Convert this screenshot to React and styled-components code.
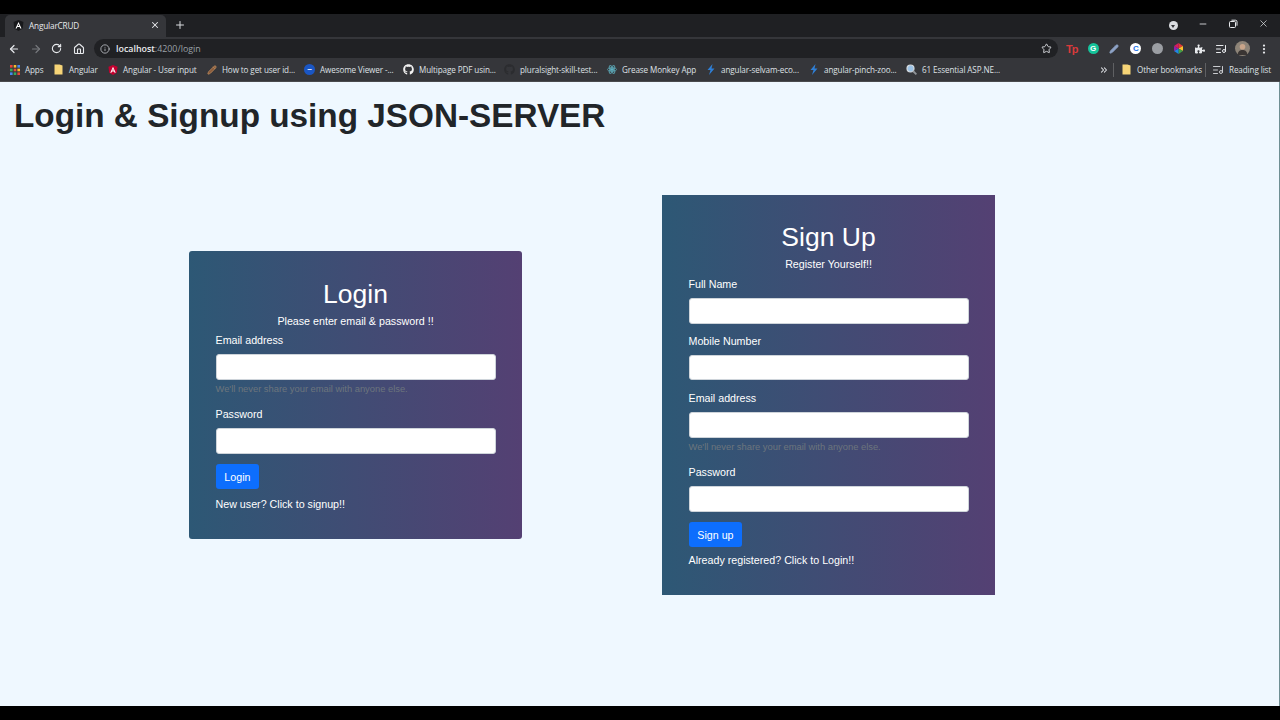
import React from 'react';
import styled, { createGlobalStyle } from 'styled-components';
import { ArrowLeft, ArrowRight, RotateCw, Home, Info, Star, X, Plus, Minus, MoreVertical, ListMusic, Pencil, ChevronsRight } from 'lucide-react';
import { FaGithub, FaPuzzlePiece } from 'react-icons/fa';

const GlobalStyle = createGlobalStyle`
    html, body {
        margin: 0;
        padding: 0;
        background: #000;
    }
    body {
        font-family: "Liberation Sans", Arial, sans-serif;
    }
`;

const Screen = styled.div`
    width: 1280px;
    height: 720px;
    overflow: hidden;
    display: flex;
    flex-direction: column;
    background: #000;
    padding: 14px 0;
    box-sizing: border-box;
`;

const TabStrip = styled.div`
    height: 23px;
    flex: none;
    background: #1f2023;
    display: flex;
    align-items: flex-end;
    padding-left: 5px;
`;

const Tab = styled.div`
    width: 161px;
    height: 22px;
    box-sizing: border-box;
    background: #35363a;
    border-radius: 5px 5px 0 0;
    display: flex;
    align-items: center;
    padding: 0 6px 2px 8px;
    color: #e8eaed;
    font: 8.2px "Open Sans", sans-serif;
`;

const TabTitle = styled.span`
    margin-left: 5px;
    flex: 1;
    letter-spacing: -0.15px;
`;

const NewTab = styled.div`
    margin: 0 0 2px 8px;
    height: 20px;
    display: flex;
    align-items: center;
    color: #dadce0;
`;

const WindowButtons = styled.div`
    margin-left: auto;
    height: 23px;
    display: flex;
    align-items: center;
    color: #e8eaed;
    padding-right: 1px;
`;

const ProfileDot = styled.div`
    width: 9px;
    height: 9px;
    border-radius: 50%;
    background: #dadce0;
    margin: 0 10px 0 0;
    display: flex;
    align-items: center;
    justify-content: center;
    &::after {
        content: "";
        border: 2.5px solid transparent;
        border-top: 3px solid #35363a;
        margin-top: 3px;
    }
`;

const WinBtn = styled.div`
    width: 30.5px;
    display: flex;
    justify-content: center;
    margin-bottom: 4px;
`;

const Toolbar = styled.div`
    height: 23px;
    flex: none;
    background: #35363a;
    display: flex;
    align-items: center;
    padding-left: 8px;
    color: #e8eaed;
`;

const NavIcon = styled.div`
    width: 21.5px;
    display: flex;
    color: ${p => (p.$dim ? '#77797c' : '#e8eaed')};
`;

const Omnibox = styled.div`
    width: 964px;
    height: 19px;
    box-sizing: border-box;
    border-radius: 10px;
    background: #202124;
    display: flex;
    align-items: center;
    padding: 0 6.5px 0 6px;
    font: 8.9px "Open Sans", sans-serif;
    color: #9aa0a6;
`;

const Host = styled.span`
    margin-left: 6px;
    color: #e8eaed;
    font-weight: 600;
`;

const OmniStar = styled.div`
    margin-left: auto;
    display: flex;
`;

const Extensions = styled.div`
    display: flex;
    align-items: center;
    margin-left: 3px;
`;

const Ext = styled.div`
    width: 21.4px;
    display: flex;
    justify-content: center;
    align-items: center;
`;

const Badge = styled.div`
    width: 11px;
    height: 11px;
    flex: none;
    border-radius: 50%;
    background: ${p => p.$bg};
    color: ${p => p.$fg || '#fff'};
    font: bold 8px "Liberation Sans", sans-serif;
    display: flex;
    align-items: center;
    justify-content: center;
`;

const RedMark = styled.span`
    color: #d93a3a;
    font: bold 11px "Liberation Sans", sans-serif;
    letter-spacing: -1px;
`;

const Bookmarks = styled.div`
    height: 22px;
    flex: none;
    background: #35363a;
    box-sizing: border-box;
    border-bottom: 1px solid #4a4b4e;
    display: flex;
    align-items: center;
    padding: 0 10px 2px;
    color: #dfe1e5;
    font: 8.1px "Open Sans", sans-serif;
    white-space: nowrap;
`;

const Mark = styled.div`
    display: flex;
    align-items: center;
    gap: 5px;
    width: ${p => p.$w}px;
    margin-right: ${p => p.$gap ?? 11}px;
    margin-left: ${p => p.$left ?? 0}px;
    flex: none;
    & > svg {
        flex: none;
    }
`;

const MarkLabel = styled.span`
    letter-spacing: -0.1px;
`;

const Sep = styled.div`
    width: 1px;
    height: 14px;
    background: #5f6063;
    flex: none;
`;

const Overflow = styled.div`
    margin-left: auto;
    margin-right: 4px;
    display: flex;
`;

const Page = styled.main`
    flex: 1;
    background: #eff8ff;
    border-right: 1px solid #6f8f94;
    display: flex;
    flex-direction: column;
`;

const Heading = styled.h1`
    margin: 14px 0 0 14px;
    font-size: 33.3px;
    line-height: 39px;
    font-weight: 700;
    color: #212529;
`;

const Cards = styled.div`
    margin-top: 20px;
    height: 480px;
    padding-left: 189px;
    display: flex;
    align-items: center;
    gap: 140px;
`;

const Card = styled.section`
    width: 333px;
    box-sizing: border-box;
    padding: ${p => p.$pad}px 26.5px 0;
    height: ${p => p.$h}px;
    border-radius: ${p => p.$r}px;
    background: linear-gradient(to right, #2d5875, #544073);
    color: #fff;
`;

const Title = styled.h2`
    margin: 0;
    font-size: 26.5px;
    line-height: 32px;
    font-weight: 400;
    text-align: center;
`;

const Sub = styled.p`
    margin: 3px 0 ${p => p.$gap}px;
    font-size: 10.7px;
    line-height: 17px;
    text-align: center;
`;

const Label = styled.label`
    display: block;
    margin-top: ${p => p.$top ?? 0}px;
    font-size: 10.7px;
    line-height: 19px;
`;

const Input = styled.input`
    display: block;
    width: 100%;
    height: 25.5px;
    margin-top: 4px;
    box-sizing: border-box;
    border: 1px solid #ced4da;
    border-radius: 3px;
    background: #fff;
    padding: 0;
`;

const Help = styled.div`
    margin-top: 2.5px;
    font-size: 9.35px;
    line-height: 14px;
    color: #6c757d;
`;

const Submit = styled.button`
    display: block;
    margin-top: 10.5px;
    height: 25px;
    box-sizing: border-box;
    padding: 0 8.8px;
    border: 0;
    border-radius: 3px;
    background: #0d6efd;
    color: #fff;
    font: 10.7px "Liberation Sans", sans-serif;
`;

const Foot = styled.p`
    margin: ${p => p.$top}px 0 0;
    font-size: 10.7px;
    line-height: 18px;
`;

function AngularIcon({ bg, fg, size = 10 }) {
    return (
        <svg width={size} height={size} viewBox="0 0 20 20">
            <polygon points="10,0 19,3.5 17.6,15.5 10,20 2.4,15.5 1,3.5" fill={bg} />
            <polygon points="10,3.5 15.5,15.5 13.2,15.5 12.1,12.8 7.9,12.8 6.8,15.5 4.5,15.5" fill={fg} />
            <polygon points="10,7.5 11.3,11 8.7,11" fill={bg} />
        </svg>
    );
}

function FolderIcon() {
    return (
        <svg width="10" height="11" viewBox="0 0 10 11">
            <path d="M0.5 0.5h5l3 1v9h-8z" fill="#f6d477" />
        </svg>
    );
}

function AppsIcon() {
    const colors = ['#e8453c', '#f9bb2d', '#4688f1', '#3aa757', '#e8453c', '#f9bb2d', '#4688f1', '#3aa757', '#e8453c'];
    return (
        <svg width="10" height="10" viewBox="0 0 10 10">
            {colors.map((c, i) => (
                <rect key={i} x={(i % 3) * 3.7} y={Math.floor(i / 3) * 3.7} width="2.6" height="2.6" fill={c} />
            ))}
        </svg>
    );
}

function BoltIcon() {
    return (
        <svg width="10" height="11" viewBox="0 0 9 11">
            <path d="M6 0L1 6h3l-1.5 5L8 4.5H5z" fill="#2f7fd6" />
        </svg>
    );
}

function SearchDocIcon() {
    return (
        <svg width="11" height="11" viewBox="0 0 11 11">
            <circle cx="4.5" cy="4.5" r="3.5" fill="#9cc3e6" stroke="#d5dbe0" strokeWidth="1.2" />
            <path d="M7 7l3.4 3.4" stroke="#8f9499" strokeWidth="1.8" />
        </svg>
    );
}

function ReactDot() {
    return (
        <svg width="10" height="11" viewBox="0 0 11 11" fill="none" stroke="#5fb3c4" strokeWidth="0.8">
            <ellipse cx="5.5" cy="5.5" rx="5" ry="2" />
            <ellipse cx="5.5" cy="5.5" rx="5" ry="2" transform="rotate(60 5.5 5.5)" />
            <ellipse cx="5.5" cy="5.5" rx="5" ry="2" transform="rotate(120 5.5 5.5)" />
            <circle cx="5.5" cy="5.5" r="1.2" fill="#5fb3c4" />
        </svg>
    );
}

function ColorWheel() {
    return (
        <svg width="11" height="11" viewBox="0 0 11 11">
            <polygon points="5.5,0 10,3 5.5,5.5" fill="#e53935" />
            <polygon points="10,3 10,8 5.5,5.5" fill="#fbc02d" />
            <polygon points="10,8 5.5,11 5.5,5.5" fill="#43a047" />
            <polygon points="5.5,11 1,8 5.5,5.5" fill="#1e88e5" />
            <polygon points="1,8 1,3 5.5,5.5" fill="#8e24aa" />
            <polygon points="1,3 5.5,0 5.5,5.5" fill="#d81b60" />
        </svg>
    );
}

function Avatar() {
    return (
        <svg width="15" height="15" viewBox="0 0 15 15">
            <circle cx="7.5" cy="7.5" r="7.5" fill="#8d8478" />
            <circle cx="7.5" cy="5.8" r="2.8" fill="#c9a58a" />
            <path d="M2.5 14c.5-4 2.5-5 5-5s4.5 1 5 5z" fill="#3a3533" />
        </svg>
    );
}

const bookmarks = [
    { w: 33, icon: <AppsIcon />, label: 'Apps' },
    { w: 43, icon: <FolderIcon />, label: 'Angular' },
    { w: 88, icon: <AngularIcon bg="#c3002f" fg="#fff" />, label: 'Angular - User input' },
    { w: 86, icon: <Pencil size={10} color="#b98a5e" fill="#8a5a3a" />, label: 'How to get user id...' },
    { w: 88, icon: <Badge $bg="#1a56c4">~</Badge>, label: 'Awesome Viewer -...' },
    { w: 90, icon: <FaGithub size={11} color="#f1f1f1" />, label: 'Multipage PDF usin...' },
    { w: 92, icon: <FaGithub size={11} color="#2b2c2f" />, label: 'pluralsight-skill-test...' },
    { w: 88, icon: <ReactDot />, label: 'Grease Monkey App' },
    { w: 92, icon: <BoltIcon />, label: 'angular-selvam-eco...' },
    { w: 86, icon: <BoltIcon />, label: 'angular-pinch-zoo...' },
    { w: 91, icon: <SearchDocIcon />, label: '61 Essential ASP.NE...' },
];

function BrowserChrome() {
    return (
        <>
            <TabStrip>
                <Tab>
                    <AngularIcon bg="#17181b" fg="#fff" size={11} />
                    <TabTitle>AngularCRUD</TabTitle>
                    <X size={10} strokeWidth={2.5} />
                </Tab>
                <NewTab><Plus size={12} strokeWidth={2} /></NewTab>
                <WindowButtons>
                    <ProfileDot />
                    <WinBtn><Minus size={10} /></WinBtn>
                    <WinBtn>
                        <svg width="10" height="10" viewBox="0 0 10 10" fill="none" stroke="currentColor">
                            <rect x="1.5" y="2.5" width="6" height="6" rx="1" />
                            <path d="M3.5 1.2h4a1.5 1.5 0 0 1 1.5 1.5v4" />
                        </svg>
                    </WinBtn>
                    <WinBtn><X size={11} strokeWidth={1.5} /></WinBtn>
                </WindowButtons>
            </TabStrip>
            <Toolbar>
                <NavIcon><ArrowLeft size={12} strokeWidth={2.4} /></NavIcon>
                <NavIcon $dim><ArrowRight size={12} strokeWidth={2.4} /></NavIcon>
                <NavIcon><RotateCw size={11} strokeWidth={2.4} /></NavIcon>
                <NavIcon><Home size={12} strokeWidth={2.2} /></NavIcon>
                <Omnibox>
                    <Info size={10} color="#bdc1c6" />
                    <Host>localhost</Host>:4200/login
                    <OmniStar><Star size={11} color="#dadce0" strokeWidth={2} /></OmniStar>
                </Omnibox>
                <Extensions>
                    <Ext><RedMark>Tp</RedMark></Ext>
                    <Ext><Badge $bg="#15c39a">G</Badge></Ext>
                    <Ext><Pencil size={10} color="#8ea3c7" fill="#8ea3c7" /></Ext>
                    <Ext><Badge $bg="#fff" $fg="#1a73e8">C</Badge></Ext>
                    <Ext><Badge $bg="#9b9ea3" /></Ext>
                    <Ext><ColorWheel /></Ext>
                    <Ext><FaPuzzlePiece size={10} color="#e8eaed" /></Ext>
                    <Ext><ListMusic size={12} color="#e8eaed" /></Ext>
                    <Ext><Avatar /></Ext>
                    <Ext><MoreVertical size={12} color="#e8eaed" strokeWidth={2.5} /></Ext>
                </Extensions>
            </Toolbar>
            <Bookmarks>
                {bookmarks.map(b => (
                    <Mark key={b.label} $w={b.w}>
                        {b.icon}
                        <MarkLabel>{b.label}</MarkLabel>
                    </Mark>
                ))}
                <Overflow><ChevronsRight size={10} strokeWidth={2.5} /></Overflow>
                <Sep />
                <Mark $w={76} $gap={7} $left={8}>
                    <FolderIcon />
                    <MarkLabel>Other bookmarks</MarkLabel>
                </Mark>
                <Sep />
                <Mark $w={58} $gap={0} $left={6}>
                    <ListMusic size={12} color="#c9cbcf" />
                    <MarkLabel>Reading list</MarkLabel>
                </Mark>
            </Bookmarks>
        </>
    );
}

export default function App() {
    return (
        <Screen>
            <GlobalStyle />
            <BrowserChrome />
            <Page>
                <Heading>Login &amp; Signup using JSON-SERVER</Heading>
                <Cards>
                    <Card $h={288} $r={3} $pad={27}>
                        <Title>Login</Title>
                        <Sub $gap={1}>Please enter email &amp; password !!</Sub>
                        <Label>Email address</Label>
                        <Input type="email" />
                        <Help>We'll never share your email with anyone else.</Help>
                        <Label $top={9}>Password</Label>
                        <Input type="password" />
                        <Submit>Login</Submit>
                        <Foot $top={5.5}>New user? Click to signup!!</Foot>
                    </Card>
                    <Card $h={400} $r={0} $pad={26}>
                        <Title>Sign Up</Title>
                        <Sub $gap={2}>Register Yourself!!</Sub>
                        <Label>Full Name</Label>
                        <Input type="text" />
                        <Label $top={8}>Mobile Number</Label>
                        <Input type="text" />
                        <Label $top={9}>Email address</Label>
                        <Input type="email" />
                        <Help>We'll never share your email with anyone else.</Help>
                        <Label $top={9}>Password</Label>
                        <Input type="password" />
                        <Submit>Sign up</Submit>
                        <Foot $top={3.5}>Already registered? Click to Login!!</Foot>
                    </Card>
                </Cards>
            </Page>
        </Screen>
    );
}
